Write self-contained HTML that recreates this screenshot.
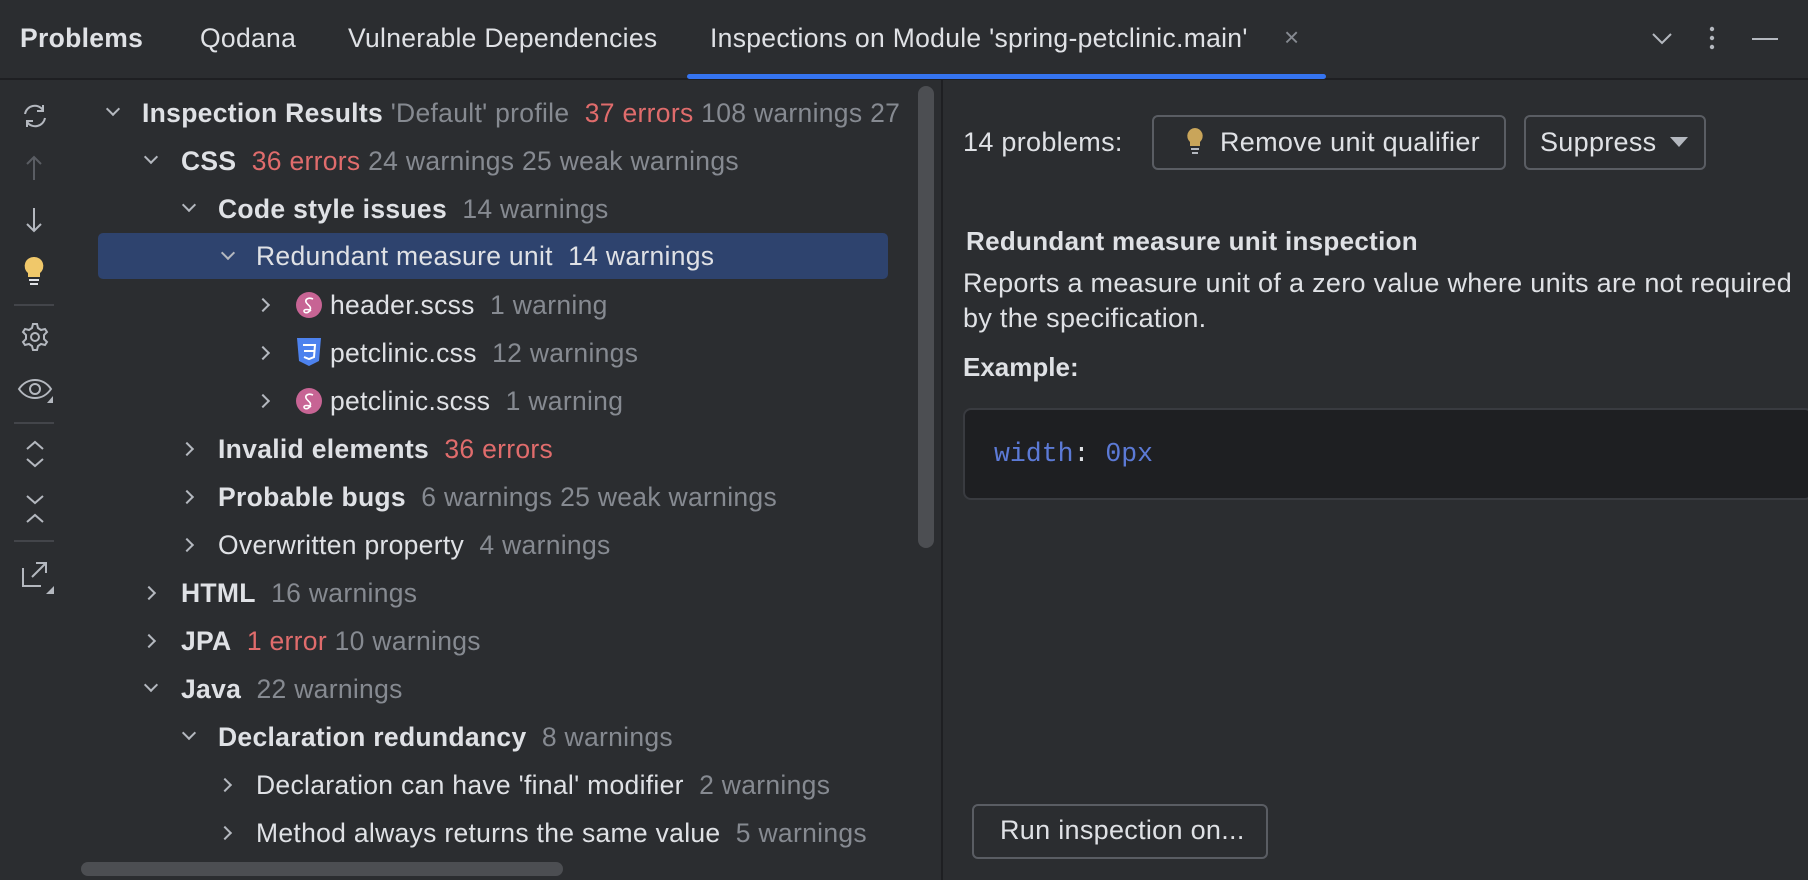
<!DOCTYPE html>
<html><head><meta charset="utf-8"><style>
*{margin:0;padding:0;box-sizing:border-box}
body{width:1808px;height:880px;background:#2b2d30;font-family:"Liberation Sans",sans-serif;color:#dfe1e5;position:relative;overflow:hidden;font-size:23px}
.a{position:absolute;white-space:nowrap}
.tab{top:0;line-height:76px;font-size:26.5px;letter-spacing:0.3px}
.row{position:absolute;height:48px;line-height:48px;white-space:nowrap;font-size:26.5px;letter-spacing:0.3px}
.g{color:#868a91}.r{color:#e06c6c}.b{font-weight:bold}
.chev{position:absolute;width:10px;height:10px;border-right:2px solid #b4b8bf;border-bottom:2px solid #b4b8bf}
.down{transform:rotate(45deg)}.right{transform:rotate(-45deg)}
.sep{position:absolute;left:14px;width:40px;height:2px;background:#43454a}
.btn{position:absolute;border:2px solid #5a5d63;border-radius:6px}
.t{font-size:27px;letter-spacing:0.3px}
</style></head><body>
<div style="position:absolute;left:0;top:78px;width:1808px;height:2px;background:#1e1f22"></div>
<div class="a tab b" style="left:20px">Problems</div>
<div class="a tab" style="left:200px">Qodana</div>
<div class="a tab" style="left:348px">Vulnerable Dependencies</div>
<div class="a tab" style="left:710px">Inspections on Module 'spring-petclinic.main'</div>
<div class="a" style="left:1284px;top:22px;font-size:26px;color:#868a91">×</div>
<div style="position:absolute;left:687px;top:74px;width:639px;height:5px;background:#3574f0;border-radius:3px"></div>
<svg class="a" style="left:1650px;top:28px" width="24" height="20"><path d="M3 6l9 9 9-9" fill="none" stroke="#b4b8bf" stroke-width="2"/></svg>
<svg class="a" style="left:1706px;top:24px" width="12" height="30"><circle cx="6" cy="5" r="2.2" fill="#b4b8bf"/><circle cx="6" cy="14" r="2.2" fill="#b4b8bf"/><circle cx="6" cy="23" r="2.2" fill="#b4b8bf"/></svg>
<div style="position:absolute;left:1752px;top:38px;width:26px;height:2px;background:#b4b8bf"></div>

<svg class="a" style="left:20px;top:102px" width="30" height="28" fill="none" stroke="#b4b8bf" stroke-width="2"><path d="M5 12a10 10 0 0 1 18-4M25 16a10 10 0 0 1-18 4"/><path d="M23 3v6h-6M7 25v-6h6"/></svg>
<svg class="a" style="left:24px;top:154px" width="20" height="28" fill="none" stroke="#5a5d63" stroke-width="2"><path d="M10 26V3M3 10l7-7 7 7"/></svg>
<svg class="a" style="left:24px;top:206px" width="20" height="28" fill="none" stroke="#b4b8bf" stroke-width="2"><path d="M10 2v23M3 18l7 7 7-7"/></svg>
<svg class="a" style="left:22px;top:256px" width="24" height="30"><path d="M12 1a9 9 0 0 0-6 16v4h12v-4a9 9 0 0 0-6-16z" fill="#f0c86a"/><rect x="7" y="23" width="10" height="2" fill="#dfe1e5"/><rect x="8" y="27" width="8" height="2" fill="#dfe1e5"/></svg>
<div class="sep" style="top:304px"></div>
<svg class="a" style="left:20px;top:322px" width="30" height="30" fill="none" stroke="#b4b8bf" stroke-width="2"><path d="M13 2h4l1 4 3 2 4-1 2 3-3 3v4l3 3-2 3-4-1-3 2-1 4h-4l-1-4-3-2-4 1-2-3 3-3v-4l-3-3 2-3 4 1 3-2z"/><circle cx="15" cy="15" r="4"/></svg>
<svg class="a" style="left:17px;top:376px" width="36" height="28" fill="none" stroke="#b4b8bf" stroke-width="2"><path d="M2 13c8-12 24-12 32 0c-8 12-24 12-32 0z"/><circle cx="18" cy="13" r="5"/><path d="M36 20v7h-6z" fill="#b4b8bf" stroke="none"/></svg>
<div class="sep" style="top:422px"></div>
<svg class="a" style="left:24px;top:440px" width="22" height="30" fill="none" stroke="#b4b8bf" stroke-width="2"><path d="M3 9l8-7 8 7M3 19l8 7 8-7"/></svg>
<svg class="a" style="left:24px;top:494px" width="22" height="30" fill="none" stroke="#b4b8bf" stroke-width="2"><path d="M3 2l8 7 8-7M3 28l8-7 8 7"/></svg>
<div class="sep" style="top:540px"></div>
<svg class="a" style="left:20px;top:560px" width="34" height="34" fill="none" stroke="#b4b8bf" stroke-width="2"><path d="M3 8v18h18M12 17l14-14M16 3h10v10"/><path d="M34 26v8h-8z" fill="#b4b8bf" stroke="none"/></svg>

<div style="position:absolute;left:98px;top:233px;width:790px;height:46px;background:#2e436e;border-radius:5px"></div>

<div class="chev down" style="left:108px;top:104px"></div>
<div class="row" style="left:142px;top:89px"><span class="b">Inspection Results</span> <span class="g">'Default' profile</span>&nbsp; <span class="r">37 errors</span> <span class="g">108 warnings 27</span></div>
<div class="chev down" style="left:146px;top:152px"></div>
<div class="row" style="left:181px;top:137px"><span class="b">CSS</span>&nbsp; <span class="r">36 errors</span> <span class="g">24 warnings 25 weak warnings</span></div>
<div class="chev down" style="left:184px;top:200px"></div>
<div class="row" style="left:218px;top:185px"><span class="b">Code style issues</span>&nbsp; <span class="g">14 warnings</span></div>
<div class="chev down" style="left:223px;top:248px"></div>
<div class="row" style="left:256px;top:232px">Redundant measure unit&nbsp; 14 warnings</div>

<div class="chev right" style="left:258px;top:300px"></div>
<svg class="a" style="left:295px;top:291px" width="28" height="28"><circle cx="14" cy="14" r="13" fill="#c76494"/><path d="M18 8c-4-2-8 0-7 3s6 4 4 8-6 3-6 1 5-2 7 0" fill="none" stroke="#fff" stroke-width="1.6"/></svg>
<div class="row" style="left:330px;top:281px">header.scss&nbsp; <span class="g">1 warning</span></div>
<div class="chev right" style="left:258px;top:348px"></div>
<svg class="a" style="left:297px;top:338px" width="24" height="30"><path d="M0 0h24l-2 23-10 5-10-5z" fill="#4d82ee"/><path d="M6 7h12l-1 12-5 2-5-2M7 13h10" fill="none" stroke="#fff" stroke-width="2"/></svg>
<div class="row" style="left:330px;top:329px">petclinic.css&nbsp; <span class="g">12 warnings</span></div>
<div class="chev right" style="left:258px;top:396px"></div>
<svg class="a" style="left:295px;top:387px" width="28" height="28"><circle cx="14" cy="14" r="13" fill="#c76494"/><path d="M18 8c-4-2-8 0-7 3s6 4 4 8-6 3-6 1 5-2 7 0" fill="none" stroke="#fff" stroke-width="1.6"/></svg>
<div class="row" style="left:330px;top:377px">petclinic.scss&nbsp; <span class="g">1 warning</span></div>

<div class="chev right" style="left:182px;top:444px"></div>
<div class="row" style="left:218px;top:425px"><span class="b">Invalid elements</span>&nbsp; <span class="r">36 errors</span></div>
<div class="chev right" style="left:182px;top:492px"></div>
<div class="row" style="left:218px;top:473px"><span class="b">Probable bugs</span>&nbsp; <span class="g">6 warnings 25 weak warnings</span></div>
<div class="chev right" style="left:182px;top:540px"></div>
<div class="row" style="left:218px;top:521px">Overwritten property&nbsp; <span class="g">4 warnings</span></div>
<div class="chev right" style="left:144px;top:588px"></div>
<div class="row" style="left:181px;top:569px"><span class="b">HTML</span>&nbsp; <span class="g">16 warnings</span></div>
<div class="chev right" style="left:144px;top:636px"></div>
<div class="row" style="left:181px;top:617px"><span class="b">JPA</span>&nbsp; <span class="r">1 error</span> <span class="g">10 warnings</span></div>
<div class="chev down" style="left:146px;top:680px"></div>
<div class="row" style="left:181px;top:665px"><span class="b">Java</span>&nbsp; <span class="g">22 warnings</span></div>
<div class="chev down" style="left:184px;top:728px"></div>
<div class="row" style="left:218px;top:713px"><span class="b">Declaration redundancy</span>&nbsp; <span class="g">8 warnings</span></div>
<div class="chev right" style="left:220px;top:780px"></div>
<div class="row" style="left:256px;top:761px">Declaration can have 'final' modifier&nbsp; <span class="g">2 warnings</span></div>
<div class="chev right" style="left:220px;top:828px"></div>
<div class="row" style="left:256px;top:809px">Method always returns the same value&nbsp; <span class="g">5 warnings</span></div>

<div style="position:absolute;left:918px;top:86px;width:16px;height:462px;background:#4c4e52;border-radius:8px"></div>
<div style="position:absolute;left:81px;top:862px;width:482px;height:14px;background:#4c4e52;border-radius:7px"></div>
<div style="position:absolute;left:941px;top:80px;width:2px;height:800px;background:#1e1f22"></div>

<div class="a t" style="left:963px;top:127px">14 problems:</div>
<div class="btn" style="left:1152px;top:115px;width:354px;height:55px"></div>
<svg class="a" style="left:1185px;top:127px" width="20" height="30"><path d="M10 1a8 8 0 0 0-5 14v4h10v-4a8 8 0 0 0-5-14z" fill="#c9a55a"/><rect x="6" y="21" width="8" height="2" fill="#b4b8bf"/><rect x="7" y="25" width="6" height="2" fill="#b4b8bf"/></svg>
<div class="a t" style="left:1220px;top:127px">Remove unit qualifier</div>
<div class="btn" style="left:1524px;top:115px;width:182px;height:55px"></div>
<div class="a t" style="left:1540px;top:127px">Suppress</div>
<svg class="a" style="left:1670px;top:137px" width="18" height="12"><path d="M0 0h18l-9 10z" fill="#b4b8bf"/></svg>
<div class="a b" style="left:966px;top:226px;font-size:26px;letter-spacing:0.3px">Redundant measure unit inspection</div>
<div class="a t" style="left:963px;top:268px">Reports a measure unit of a zero value where units are not required</div>
<div class="a t" style="left:963px;top:303px">by the specification.</div>
<div class="a b" style="left:963px;top:352px;font-size:26px">Example:</div>
<div style="position:absolute;left:963px;top:408px;width:850px;height:92px;background:#1e1f22;border:2px solid #393b40;border-radius:8px"></div>
<div class="a" style="left:994px;top:439px;font-family:'Liberation Mono',monospace;font-size:26.5px"><span style="color:#5c7ad6">width</span>: <span style="color:#5c7ad6">0px</span></div>
<div class="btn" style="left:972px;top:804px;width:296px;height:55px"></div>
<div class="a t" style="left:1000px;top:815px">Run inspection on...</div>
</body></html>
